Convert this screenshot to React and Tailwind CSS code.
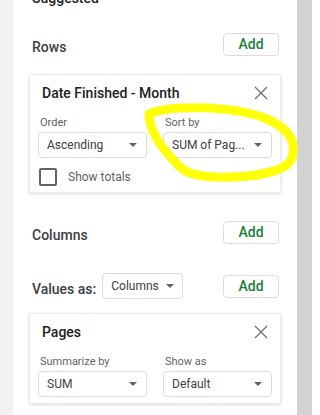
import React from 'react'

function Caret() {
  return (
    <svg width="8" height="4" viewBox="0 0 8 4" className="shrink-0">
      <path d="M0 0h8L4 4z" fill="#5f6368" />
    </svg>
  )
}

function CloseIcon() {
  return (
    <svg width="14" height="14" viewBox="0 0 14 14" className="shrink-0">
      <path d="M1 1L13 13M13 1L1 13" stroke="#6b6f73" strokeWidth="1.3" fill="none" />
    </svg>
  )
}

function Select({ value }) {
  return (
    <div className="flex h-[26px] items-center justify-between rounded-[4px] border border-[#dadce0] bg-white pl-[8px] pr-[9px] text-[12px] text-[#3c4043]">
      <span className="whitespace-nowrap">{value}</span>
      <Caret />
    </div>
  )
}

function AddButton() {
  return (
    <button className="flex h-[23px] w-[56px] items-center justify-center rounded-[4px] border border-[#dadce0] bg-white text-[14px] font-medium text-[#188038]">
      Add
    </button>
  )
}

function Field({ label, value }) {
  return (
    <div>
      <div className="pl-[2px] text-[11px] leading-[16px] text-[#5f6368]">{label}</div>
      <div className="mt-[1px]">
        <Select value={value} />
      </div>
    </div>
  )
}

function FieldCard({ title, fields, children }) {
  return (
    <div className="rounded-[2px] border border-[#eceded] bg-white px-[8px] pb-[6px] pt-[8px] shadow-[0_1px_3px_rgba(60,64,67,0.2)]">
      <div className="flex h-[20px] items-center justify-between pl-[4px] pr-[4px]">
        <span className="text-[14px] font-medium text-[#202124]">{title}</span>
        <CloseIcon />
      </div>
      <div className="mt-[12px] grid grid-cols-2 gap-4">
        {fields.map((f) => (
          <Field key={f.label} label={f.label} value={f.value} />
        ))}
      </div>
      {children}
    </div>
  )
}

function SectionHeader({ title, children }) {
  return (
    <div className="flex items-center justify-between pl-[3px] pr-[2px]">
      <div className="flex items-center">
        <span className="mt-[5px] text-[14px] font-medium leading-[14px] text-[#3c4043]">{title}</span>
        {children}
      </div>
      <AddButton />
    </div>
  )
}

export default function App() {
  return (
    <div className="relative flex h-[415px] w-[312px] overflow-hidden bg-white font-[Roboto,sans-serif]">
      <div className="w-[13px] shrink-0 bg-[#f1f1f1]" />

      <div className="flex-1 px-[16px]">
        <div className="mt-[-12px] h-[20px] pl-[3px] text-[14px] font-medium leading-[20px] text-[#202124]">
          Suggested
        </div>

        <div className="mt-[25px]">
          <SectionHeader title="Rows" />
        </div>

        <div className="mt-[18px]">
          <FieldCard
            title="Date Finished - Month"
            fields={[
              { label: 'Order', value: 'Ascending' },
              { label: 'Sort by', value: 'SUM of Pag...' },
            ]}
          >
            <div className="mt-[10px] flex items-center pl-[1px]">
              <div className="h-[18px] w-[18px] rounded-[2px] border-2 border-[#5f6368]" />
              <span className="ml-[11px] text-[12px] text-[#5f6368]">Show totals</span>
            </div>
          </FieldCard>
        </div>

        <div className="mt-[28px]">
          <SectionHeader title="Columns" />
        </div>

        <div className="mt-[29px]">
          <SectionHeader title="Values as:">
            <div className="ml-[6px] flex h-[26px] w-[81px] items-center justify-between rounded-[4px] border border-[#dadce0] pl-[8px] pr-[8px] text-[12px] text-[#3c4043]">
              <span>Columns</span>
              <Caret />
            </div>
          </SectionHeader>
        </div>

        <div className="mt-[14px]">
          <FieldCard
            title="Pages"
            fields={[
              { label: 'Summarize by', value: 'SUM' },
              { label: 'Show as', value: 'Default' },
            ]}
          />
        </div>
      </div>

      <div className="w-[15px] shrink-0 bg-[#d3d3d3]" />

      <svg
        className="pointer-events-none absolute left-0 top-0"
        width="312"
        height="415"
        viewBox="0 0 312 415"
      >
        <path
          d="M149 114 C170 104 236 106 267 119 C290 129 297 143 292 158 C286 173 250 178 215 177 C196 176 186 173 179 166 C166 153 149 133 149 114"
          stroke="#ffff0a"
          strokeWidth="9"
          strokeLinecap="round"
          strokeLinejoin="round"
          fill="none"
        />
      </svg>
    </div>
  )
}
